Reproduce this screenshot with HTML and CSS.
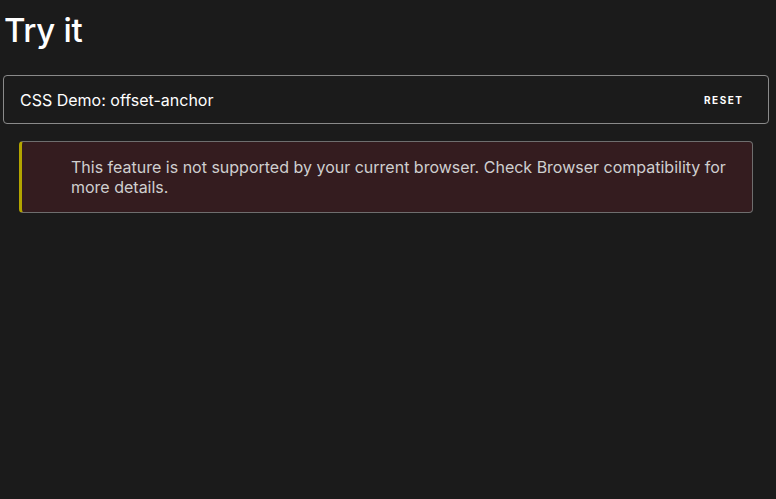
FILE: index.html
```html
<!DOCTYPE html>
<html lang="en">
<head>
<meta charset="utf-8">
<title>Try it</title>
<link rel="stylesheet" href="styles.css">
</head>
<body>
<section class="try">
  <h2 class="title">Try it</h2>
  <div class="demo-header">
    <span class="demo-name">CSS Demo: offset-anchor</span>
    <button class="reset" type="button">RESET</button>
  </div>
  <div class="notice">
    <p>This feature is not supported by your current browser. Check Browser compatibility for more details.</p>
  </div>
</section>
</body>
</html>
```

FILE: styles.css
```css
html, body {
  margin: 0;
  padding: 0;
  background: #1b1b1b;
  color: #ffffff;
  font-family: Inter, "Noto Sans", "Liberation Sans", sans-serif;
}

.try {
  padding: 0 7px 0 3px;
}

.title {
  margin: 0;
  padding: 10px 0 0 1px;
  font-size: 33px;
  font-weight: 500;
  line-height: 40px;
  letter-spacing: -0.3px;
}

.demo-header {
  margin-top: 25px;
  display: flex;
  align-items: center;
  justify-content: space-between;
  height: 47px;
  border: 1px solid #8a8a8a;
  border-radius: 4px;
  padding: 0 26px 0 16px;
}

.demo-name {
  font-size: 16px;
  line-height: 24px;
}

.reset {
  background: none;
  border: none;
  color: #ffffff;
  font-family: Inter, "Noto Sans", "Liberation Sans", sans-serif;
  font-size: 10px;
  font-weight: 700;
  letter-spacing: 1.5px;
  padding: 0;
  margin-right: -1.5px;
}

.notice {
  margin: 17px 16px 0 16px;
  background: #341c1f;
  border: 1px solid #6e6e6e;
  border-left: 3px solid #b3a400;
  border-radius: 4px;
  padding: 15px 16px 15px 49px;
}

.notice p {
  margin: 0;
  font-size: 16px;
  line-height: 20px;
  color: #cfcfcf;
}
```
